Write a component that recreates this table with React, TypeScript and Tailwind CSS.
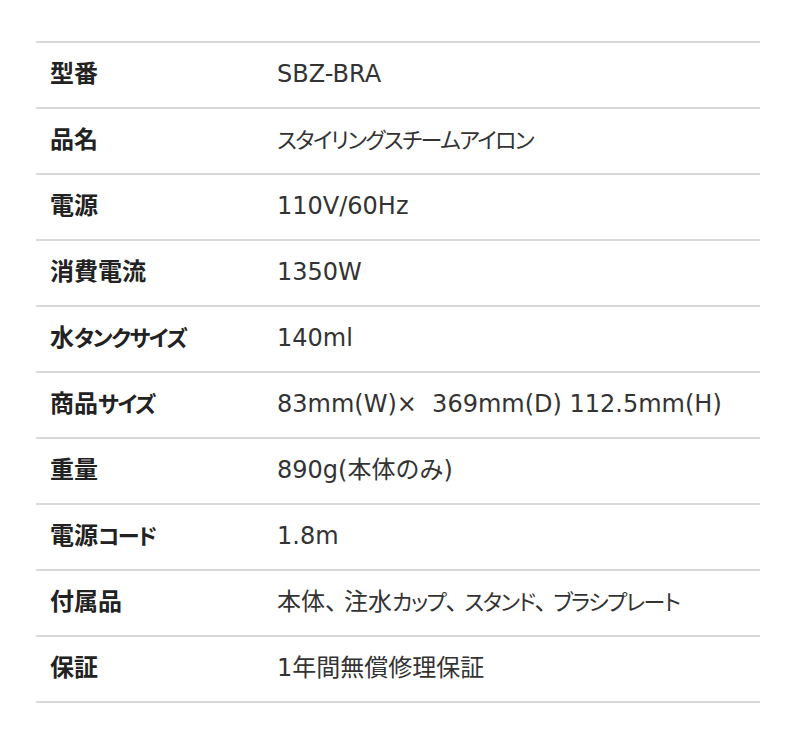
const specs: [string, string][] = [
  ["型番", "SBZ-BRA"],
  ["品名", "スタイリングスチームアイロン"],
  ["電源", "110V/60Hz"],
  ["消費電流", "1350W"],
  ["水タンクサイズ", "140ml"],
  ["商品サイズ", "83mm(W)×  369mm(D) 112.5mm(H)"],
  ["重量", "890g(本体のみ)"],
  ["電源コード", "1.8m"],
  ["付属品", "本体、注水カップ、スタンド、ブラシプレート"],
  ["保証", "1年間無償修理保証"],
];

// katakana is set a bit smaller and tighter, like the narrow kana of the original font
function Text({ text }: { text: string }) {
  const parts = text.split(/([\u30A0-\u30FF]+|、)/);
  return (
    <>
      {parts.map((part, i) => {
        if (i % 2 === 0) return part;
        if (part === "、")
          return (
            <span key={i} className="tracking-[-5px]">
              {part}
            </span>
          );
        return (
          <span
            key={i}
            className="text-[22px] tracking-[-1.5px] [font-feature-settings:'palt']"
          >
            {part}
          </span>
        );
      })}
    </>
  );
}

export default function App() {
  return (
    <div className="min-h-[739px] w-[800px] bg-white pt-[41px] font-['DejaVu_Sans','Noto_Sans_CJK_JP',sans-serif]">
      <div className="ml-[36px] w-[724px] border-b-2 border-[#d9d9d9]">
        {specs.map(([label, value]) => (
          <div
            key={label}
            className="flex h-[66px] items-center border-t-2 border-[#d9d9d9]"
          >
            <div className="w-[241px] pb-[3px] pl-[14px] text-[24px] font-bold text-[#222]">
              <Text text={label} />
            </div>
            <div className="whitespace-pre pb-[3px] text-[24px] text-[#333]">
              <Text text={value} />
            </div>
          </div>
        ))}
      </div>
    </div>
  );
}
